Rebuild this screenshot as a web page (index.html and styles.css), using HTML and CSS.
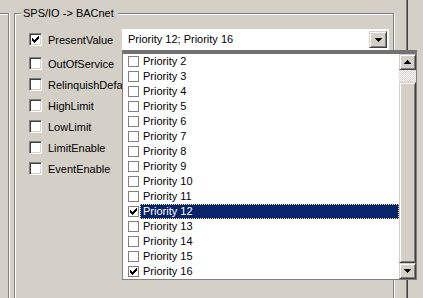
FILE: index.html
```html
<!DOCTYPE html>
<html>
<head>
    <title>SPS/IO -&gt; BACnet</title>
    <link rel="stylesheet" href="styles.css">
</head>
<body>
    <div class="window">
        <div class="left-pane"></div>

        <fieldset class="group">
            <legend>SPS/IO -&gt; BACnet</legend>
            <div class="group-body">
                <div class="row first-row">
                    <label class="check fixed">
                        <span class="box"><svg class="tick" width="7" height="7" viewBox="0 0 7 7"><path d="M0 2h1v3H0zM1 3h1v3H1zM2 4h1v3H2zM3 3h1v3H3zM4 2h1v3H4zM5 1h1v3H5zM6 0h1v3H6z"/></svg></span>
                        PresentValue
                    </label>
                    <div class="combo">
                        <span class="combo-text">Priority 12; Priority 16</span>
                        <span class="button drop-btn"><svg class="arrow" width="7" height="4" viewBox="0 0 7 4"><path d="M0 0h7v1H6v1H5v1H4v1H3V3H2V2H1V1H0z"/></svg></span>
                    </div>
                </div>
                <div class="row"><label class="check"><span class="box"></span>OutOfService</label></div>
                <div class="row"><label class="check"><span class="box"></span>RelinquishDefault</label></div>
                <div class="row"><label class="check"><span class="box"></span>HighLimit</label></div>
                <div class="row"><label class="check"><span class="box"></span>LowLimit</label></div>
                <div class="row"><label class="check"><span class="box"></span>LimitEnable</label></div>
                <div class="row"><label class="check"><span class="box"></span>EventEnable</label></div>
            </div>
        </fieldset>

        <div class="right-pane"></div>

        <!-- open dropdown of the PresentValue combo -->
        <div class="popup">
            <ul class="items">
                <li><span class="item-box"></span><span class="item-text">Priority 2</span></li>
                <li><span class="item-box"></span><span class="item-text">Priority 3</span></li>
                <li><span class="item-box"></span><span class="item-text">Priority 4</span></li>
                <li><span class="item-box"></span><span class="item-text">Priority 5</span></li>
                <li><span class="item-box"></span><span class="item-text">Priority 6</span></li>
                <li><span class="item-box"></span><span class="item-text">Priority 7</span></li>
                <li><span class="item-box"></span><span class="item-text">Priority 8</span></li>
                <li><span class="item-box"></span><span class="item-text">Priority 9</span></li>
                <li><span class="item-box"></span><span class="item-text">Priority 10</span></li>
                <li><span class="item-box"></span><span class="item-text">Priority 11</span></li>
                <li class="selected"><span class="item-box"><svg class="tick" width="7" height="7" viewBox="0 0 7 7"><path d="M0 2h1v3H0zM1 3h1v3H1zM2 4h1v3H2zM3 3h1v3H3zM4 2h1v3H4zM5 1h1v3H5zM6 0h1v3H6z"/></svg></span><span class="item-text">Priority 12</span></li>
                <li><span class="item-box"></span><span class="item-text">Priority 13</span></li>
                <li><span class="item-box"></span><span class="item-text">Priority 14</span></li>
                <li><span class="item-box"></span><span class="item-text">Priority 15</span></li>
                <li><span class="item-box"><svg class="tick" width="7" height="7" viewBox="0 0 7 7"><path d="M0 2h1v3H0zM1 3h1v3H1zM2 4h1v3H2zM3 3h1v3H3zM4 2h1v3H4zM5 1h1v3H5zM6 0h1v3H6z"/></svg></span><span class="item-text">Priority 16</span></li>
            </ul>
            <div class="scrollbar">
                <span class="button scroll-btn"><svg class="arrow" width="7" height="4" viewBox="0 0 7 4"><path d="M3 0h1v1h1v1h1v1h1v1H0V3h1V2h1V1h1z"/></svg></span>
                <div class="track"><div class="button thumb"></div></div>
                <span class="button scroll-btn"><svg class="arrow" width="7" height="4" viewBox="0 0 7 4"><path d="M0 0h7v1H6v1H5v1H4v1H3V3H2V2H1V1H0z"/></svg></span>
            </div>
        </div>
    </div>
</body>
</html>
```

FILE: styles.css
```css
body {
    margin: 0;
    background-color: #d4d0c8;
    font-family: "Liberation Sans", Arial, sans-serif;
    font-size: 11px;
    color: #000;
    overflow: hidden;
}

.window {
    position: relative;
    display: flex;
    align-items: flex-start;
    width: 423px;
    height: 298px;
    overflow: hidden;
}

svg {
    display: block;
    shape-rendering: crispEdges;
}

.left-pane {
    width: 8px;
    height: 290px;
    margin-top: 13px;
    border-top: 1px solid #808080;
    border-right: 1px solid #808080;
    box-shadow: 1px 0 0 #fff, inset 0 1px 0 #fff;
    flex-shrink: 0;
}

.group {
    width: 380px;
    height: 300px;
    box-sizing: border-box;
    margin: 7px 0 0 5px;
    padding: 0;
    min-width: 0;
    border: 1px solid #808080;
    box-shadow: inset 1px 1px 0 #fff, 1px 1px 0 #fff;
    flex-shrink: 0;
}

.group legend {
    margin-left: 6px;
    padding: 0 4px 0 2px;
    line-height: 13px;
    background: #d4d0c8;
}

.group-body {
    padding: 9px 0 0 14px;
}

.row {
    height: 21px;
    display: flex;
    align-items: center;
}

.first-row {
    margin-bottom: 3px;
}

.check {
    display: flex;
    align-items: center;
    white-space: nowrap;
}

.check.fixed {
    width: 93px;
    flex-shrink: 0;
}

.box {
    width: 13px;
    height: 13px;
    box-sizing: border-box;
    margin-right: 6px;
    display: flex;
    align-items: center;
    justify-content: center;
    background: #fff;
    border: 1px solid;
    border-color: #808080 #fff #fff #808080;
    box-shadow: inset 1px 1px 0 #404040, inset -1px -1px 0 #d4d0c8;
    flex-shrink: 0;
}

.combo {
    width: 267px;
    height: 21px;
    box-sizing: border-box;
    padding: 2px;
    display: flex;
    align-items: center;
    background: #fff;
}

.combo-text {
    flex: 1;
    padding-left: 4px;
    padding-bottom: 2px;
}

.button {
    display: flex;
    align-items: center;
    justify-content: center;
    box-sizing: border-box;
    background: #d4d0c8;
    border: 1px solid;
    border-color: #d4d0c8 #404040 #404040 #d4d0c8;
    box-shadow: inset 1px 1px 0 #fff, inset -1px -1px 0 #808080;
}

.drop-btn {
    width: 18px;
    height: 17px;
}

.right-pane {
    width: 10px;
    height: 298px;
    margin-left: 12px;
    border-left: 1px solid #808080;
    box-shadow: inset 1px 0 0 #404040;
    flex-shrink: 0;
}

.popup {
    position: absolute;
    left: 122px;
    top: 50px;
    width: 295px;
    height: 230px;
    box-sizing: border-box;
    display: flex;
    background: #fff;
    border: 1px solid #808080;
    border-top: 4px solid #727272;
}

.items {
    width: 276px;
    margin: 0;
    padding: 0;
    list-style: none;
}

.items li {
    height: 15px;
    display: flex;
    align-items: center;
    padding-left: 5px;
}

.item-box {
    width: 11px;
    height: 11px;
    box-sizing: border-box;
    display: flex;
    align-items: center;
    justify-content: center;
    border: 1px solid #808080;
    background: #fff;
    flex-shrink: 0;
}

.item-text {
    flex: 1;
    height: 15px;
    box-sizing: border-box;
    margin-left: 1px;
    padding-left: 2px;
    line-height: 13px;
    border: 1px solid transparent;
    white-space: nowrap;
}

.selected .item-text {
    background: #0a246a;
    color: #fff;
    border: 1px dotted #f3e9a0;
}

.scrollbar {
    width: 17px;
    display: flex;
    flex-direction: column;
}

.scroll-btn {
    height: 16px;
}

.track {
    flex: 1;
    background: repeating-conic-gradient(#fff 0 25%, #d4d0c8 0 50%) 0 0 / 2px 2px;
}

.thumb {
    margin-top: 12px;
    height: 181px;
}
```
